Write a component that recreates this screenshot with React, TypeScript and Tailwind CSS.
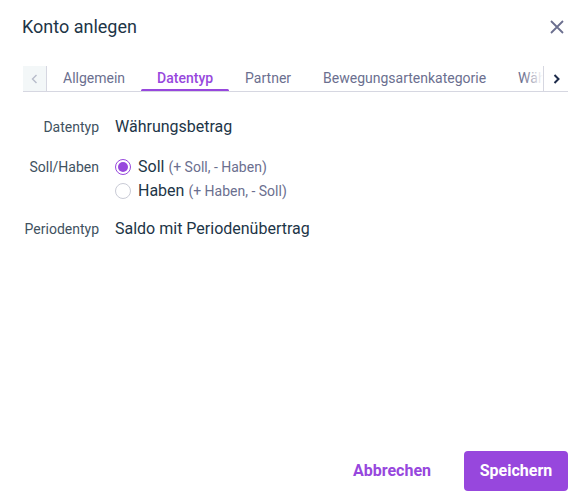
import React, { useState } from "react";

const tabs = [
  "Allgemein",
  "Datentyp",
  "Partner",
  "Bewegungsartenkategorie",
  "Währungen",
];

function Radio({ checked }: { checked: boolean }) {
  return (
    <span
      className={`flex h-4 w-4 shrink-0 items-center justify-center rounded-full border ${
        checked ? "border-[#9747dd]" : "border-[#c9cbd6]"
      }`}
    >
      {checked && <span className="h-[10px] w-[10px] rounded-full bg-[#9747dd]" />}
    </span>
  );
}

export default function App() {
  const [soll, setSoll] = useState(true);

  return (
    <div
      className="flex h-[503px] w-[588px] flex-col bg-white text-[#1d3547]"
      style={{ fontFamily: "Roboto, 'Noto Sans', sans-serif" }}
    >
      <div className="flex items-center justify-between pl-[22px] pr-[24px] pt-[15px]">
        <h1 className="text-[18px] leading-[24px]">Konto anlegen</h1>
        <button className="text-[#6b6f8f]">
          <svg width="14" height="14" viewBox="0 0 14 14" fill="none" stroke="currentColor" strokeWidth="1.8">
            <path d="M1 1 L13 13 M13 1 L1 13" />
          </svg>
        </button>
      </div>

      <div className="mx-[20px] ml-[23px] mt-[27px] flex h-[26px] border-b border-[#d6d7e1]">
        <button className="flex w-[24px] shrink-0 items-center justify-center border-r border-[#d6d7e1] bg-[#f3f7f8] text-[#b7bccb]">
          <svg width="7" height="10" viewBox="0 0 7 10" fill="none" stroke="currentColor" strokeWidth="1.4">
            <path d="M5.5 1 L1.5 5 L5.5 9" />
          </svg>
        </button>
        <div className="relative flex flex-1 overflow-hidden">
          {tabs.map((t) => (
            <div
              key={t}
              className={`relative shrink-0 px-4 text-[14px] leading-[24px] ${
                t === "Datentyp" ? "font-medium text-[#9747dd]" : "text-[#6b6f8f]"
              }`}
            >
              {t}
              {t === "Datentyp" && (
                <span className="absolute bottom-[-1px] left-0 right-0 h-[3px] rounded-full bg-[#9747dd]" />
              )}
            </div>
          ))}
          <div className="absolute right-0 top-0 h-full w-[20px] bg-gradient-to-r from-white/0 to-white" />
        </div>
        <button className="flex w-[25px] shrink-0 items-center justify-center border-l border-[#d6d7e1] text-[#1d2b4a]">
          <svg width="7" height="10" viewBox="0 0 7 10" fill="none" stroke="currentColor" strokeWidth="2">
            <path d="M1.5 1 L5.5 5 L1.5 9" />
          </svg>
        </button>
      </div>

      <div className="mt-[23px] flex flex-col pl-[22px]">
        <div className="flex items-center gap-4">
          <span className="w-[77px] text-right text-[14px] text-[#41525f]">Datentyp</span>
          <span className="text-[16px] leading-[24px]">Währungsbetrag</span>
        </div>

        <div className="mt-[16px] flex items-start gap-4">
          <span className="w-[77px] pt-[2px] text-right text-[14px] leading-[20px] text-[#41525f]">Soll/Haben</span>
          <div className="flex flex-col">
            <label className="flex h-[24px] cursor-pointer items-center gap-[7px]" onClick={() => setSoll(true)}>
              <Radio checked={soll} />
              <span className="text-[16px] leading-[24px]">
                Soll <span className="text-[14px] text-[#6b6f8f]">(+ Soll, - Haben)</span>
              </span>
            </label>
            <label className="flex h-[24px] cursor-pointer items-center gap-[7px]" onClick={() => setSoll(false)}>
              <Radio checked={!soll} />
              <span className="text-[16px] leading-[24px]">
                Haben <span className="text-[14px] text-[#6b6f8f]">(+ Haben, - Soll)</span>
              </span>
            </label>
          </div>
        </div>

        <div className="mt-[14px] flex items-center gap-4">
          <span className="w-[77px] text-right text-[14px] text-[#41525f]">Periodentyp</span>
          <span className="text-[16px] leading-[24px]">Saldo mit Periodenübertrag</span>
        </div>
      </div>

      <div className="mt-auto flex items-center justify-end gap-[17px] pb-[12px] pr-[20px]">
        <button className="px-4 text-[16px] font-bold text-[#9747dd]">Abbrechen</button>
        <button className="h-[40px] w-[104px] rounded-[4px] bg-[#9747dd] text-[16px] font-bold text-white">
          Speichern
        </button>
      </div>
    </div>
  );
}
